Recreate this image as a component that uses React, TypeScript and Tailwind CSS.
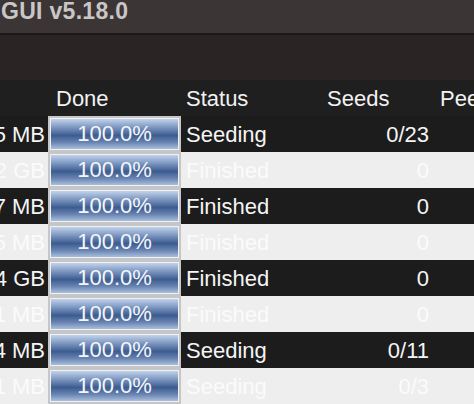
type Row = {
  size: string;
  status: string;
  seeds: string;
};

const rows: Row[] = [
  { size: "5 MB", status: "Seeding", seeds: "0/23" },
  { size: "2 GB", status: "Finished", seeds: "0" },
  { size: "7 MB", status: "Finished", seeds: "0" },
  { size: "5 MB", status: "Finished", seeds: "0" },
  { size: "4 GB", status: "Finished", seeds: "0" },
  { size: "1 MB", status: "Finished", seeds: "0" },
  { size: "4 MB", status: "Seeding", seeds: "0/11" },
  { size: "1 MB", status: "Seeding", seeds: "0/3" },
];

const ProgressCell = () => (
  <div className="flex h-full w-[133px] shrink-0 items-stretch bg-[#c6c6c6] px-[2px] py-[2px]">
    <div className="flex flex-1 items-center justify-center border border-[#eef1f6] bg-[linear-gradient(to_bottom,#c3d2e8_0%,#8fa8cd_20%,#5a77a7_42%,#3d5c8f_55%,#6884b2_78%,#aabfdd_100%)] text-[22px] leading-none text-[#f4f6fa]">
      100.0%
    </div>
  </div>
);

export default function App() {
  return (
    <div className="flex h-[404px] w-[474px] flex-col overflow-hidden bg-[#1c1c1c] font-['Liberation_Sans',Arial,sans-serif]">
      {/* title bar */}
      <div className="flex h-[33px] shrink-0 items-start bg-[#3b3535] pl-[1px]">
        <span className="text-[23px] font-bold leading-[23px] tracking-[0.3px] text-[#cbc6c6]">GUI v5.18.0</span>
      </div>
      <div className="h-[2px] shrink-0 bg-[#1d1919]" />
      {/* toolbar */}
      <div className="h-[45px] shrink-0 bg-[#2b2425]" />

      {/* header */}
      <div className="flex h-[36px] shrink-0 items-center bg-[#1f1f1f] text-[22px] text-[#f2f2f2]">
        <div className="w-[48px] shrink-0" />
        <div className="w-[133px] shrink-0 pl-[8px]">Done</div>
        <div className="w-[141px] shrink-0 pl-[5px]">Status</div>
        <div className="w-[118px] shrink-0 pl-[5px]">Seeds</div>
        <div className="flex-1 overflow-hidden whitespace-nowrap">Peers</div>
      </div>

      {rows.map((r, i) => {
        const dark = i % 2 === 0;
        return (
          <div
            key={i}
            className={`flex h-[36px] shrink-0 items-center text-[22px] ${
              dark ? "bg-[#1c1c1c] text-[#f5f5f5]" : "bg-[#eeeeee] text-[#fbfbfb]"
            }`}
          >
            <div className="flex w-[48px] shrink-0 justify-end overflow-hidden whitespace-nowrap pr-[3px]">
              <span className="shrink-0">{r.size}</span>
            </div>
            <ProgressCell />
            <div className="w-[141px] shrink-0 pl-[5px]">{r.status}</div>
            <div className="w-[110px] shrink-0 pr-[3px] text-right">{r.seeds}</div>
            <div className="flex-1" />
          </div>
        );
      })}
    </div>
  );
}
